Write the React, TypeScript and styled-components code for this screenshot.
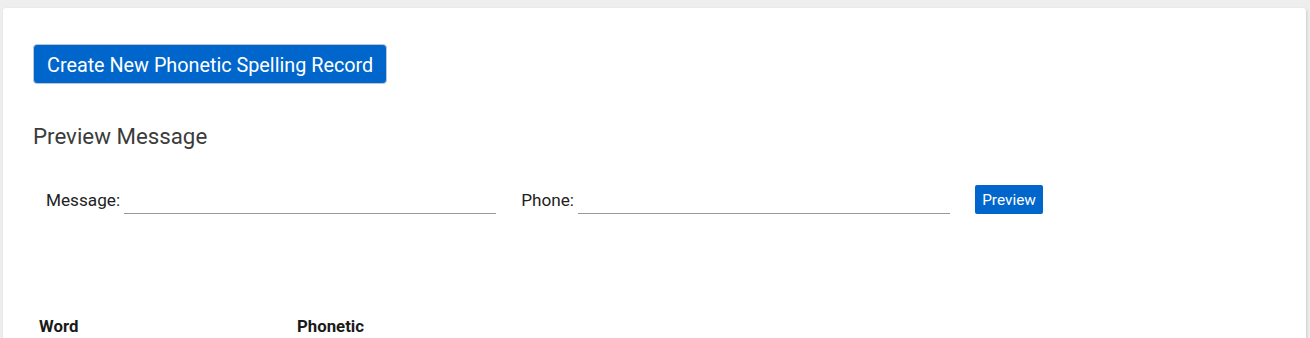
import React from "react";
import styled, { createGlobalStyle } from "styled-components";

const Global = createGlobalStyle`
  html, body { margin: 0; padding: 0; background: #eeeeee; }
  body { font-family: Roboto, "Liberation Sans", sans-serif; overflow: hidden; }
`;

const Page = styled.div`
  padding: 8px 4px 0 3px;
`;

const Card = styled.div`
  background: #fff;
  border-radius: 3px;
  box-shadow: 1px 1px 3px rgba(0, 0, 0, 0.15);
  padding: 36px 30px 40px 30px;
  min-height: 400px;
`;

const PrimaryButton = styled.button`
  display: inline-flex;
  align-items: center;
  height: 40px;
  padding: 2px 13px 0 13px;
  background: #0066cc;
  color: #fff;
  border: 1px solid #b9c7d6;
  border-radius: 4px;
  font-family: Roboto, "Liberation Sans", sans-serif;
  font-size: 19.8px;
  cursor: pointer;
`;

const Heading = styled.h2`
  margin: 39px 0 0 0;
  font-weight: 400;
  font-size: 22.3px;
  line-height: 26px;
  color: #3b3b3b;
`;

const FormRow = styled.div`
  display: flex;
  align-items: center;
  padding-left: 13px;
  margin-top: 36px;
  gap: 25px;
`;

const Field = styled.label`
  display: flex;
  align-items: flex-end;
  gap: 4px;
  font-size: 17.2px;
  color: #222;
`;

const Input = styled.input`
  width: 372px;
  height: 22px;
  border: none;
  border-bottom: 1px solid #999;
  outline: none;
  font-family: inherit;
  font-size: 16px;
  padding: 0;
  margin-bottom: -4px;
`;

const SmallButton = styled.button`
  height: 29px;
  width: 68px;
  padding: 1px 0 0 0;
  background: #0066cc;
  color: #fff;
  border: none;
  border-radius: 2px;
  font-family: Roboto, "Liberation Sans", sans-serif;
  font-size: 15.4px;
  cursor: pointer;
`;

const Table = styled.div`
  margin-top: 102px;
  display: grid;
  grid-template-columns: 258px 1fr;
  padding-left: 6px;
`;

const HeaderCell = styled.div`
  font-weight: 700;
  font-size: 16.8px;
  color: #1a1a1a;
`;

export default function App() {
  return (
    <>
      <Global />
      <Page>
        <Card>
          <PrimaryButton>Create New Phonetic Spelling Record</PrimaryButton>
          <Heading>Preview Message</Heading>
          <FormRow>
            <Field>
              Message:
              <Input type="text" />
            </Field>
            <Field>
              Phone:
              <Input type="text" />
            </Field>
            <SmallButton>Preview</SmallButton>
          </FormRow>
          <Table>
            <HeaderCell>Word</HeaderCell>
            <HeaderCell>Phonetic</HeaderCell>
          </Table>
        </Card>
      </Page>
    </>
  );
}
